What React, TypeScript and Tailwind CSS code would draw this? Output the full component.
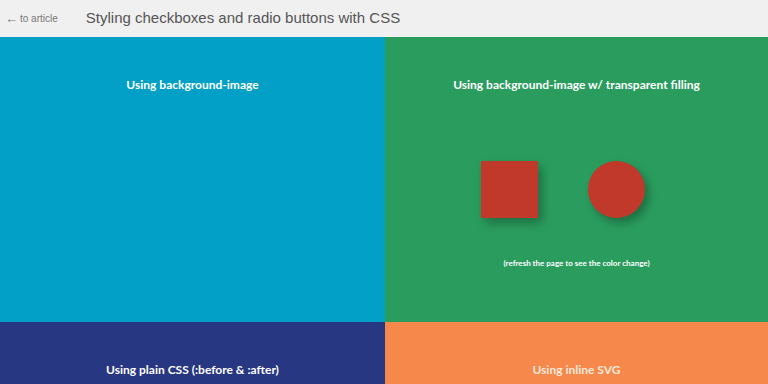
export default function App() {
  return (
    <div className="flex h-[384px] w-[768px] flex-col overflow-hidden bg-[#f0f0f0] font-['Lato',sans-serif]">
      {/* top bar */}
      <header className="flex h-[37px] shrink-0 items-center font-['Liberation_Sans',Arial,sans-serif]">
        <a className="ml-[5px] flex items-center gap-[2px] text-[10px] text-[#777]">
          <span className="text-[13px] leading-none">&larr;</span>
          to article
        </a>
        <h1 className="ml-[28px] text-[15px] text-[#555]">Styling checkboxes and radio buttons with CSS</h1>
      </header>

      <main className="grid flex-1 grid-cols-[385px_1fr] grid-rows-[285px_1fr]">
        <section className="flex flex-col items-center bg-[#02a0c6] pt-[39px]">
          <h2 className="text-[12px] font-bold text-white">Using background-image</h2>
        </section>

        <section className="flex flex-col items-center bg-[#2a9d5e] pt-[39px]">
          <h2 className="text-[12px] font-bold text-white">Using background-image w/ transparent filling</h2>
          {/* demo shapes */}
          <div className="mr-[28px] mt-[67px] flex gap-[50px]">
            <div className="h-[57px] w-[57px] bg-[#c0392b] shadow-[4px_5px_10px_rgba(0,0,0,0.3)]" />
            <div className="h-[57px] w-[57px] rounded-full bg-[#c0392b] shadow-[4px_5px_10px_rgba(0,0,0,0.3)]" />
          </div>
          <p className="mt-[39px] text-[8px] font-bold text-white">(refresh the page to see the color change)</p>
        </section>

        <section className="flex flex-col items-center bg-[#283782] pt-[39px]">
          <h2 className="text-[12px] font-bold text-white">Using plain CSS (:before &amp; :after)</h2>
        </section>

        <section className="flex flex-col items-center bg-[#f5884a] pt-[39px]">
          <h2 className="text-[12px] font-bold text-[#fbe9dc]">Using inline SVG</h2>
        </section>
      </main>
    </div>
  );
}
